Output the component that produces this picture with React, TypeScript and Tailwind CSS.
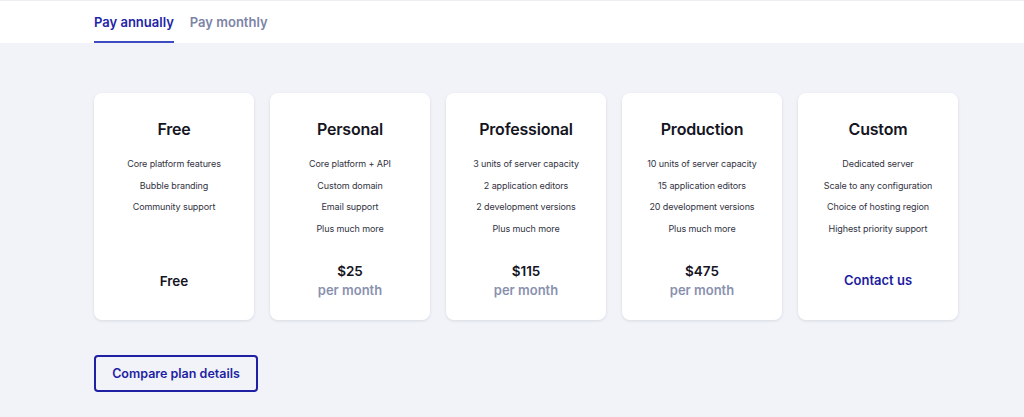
import React from "react";

interface Plan {
  name: string;
  features: string[];
  price?: string;
  label?: string;
  contact?: boolean;
}

const plans: Plan[] = [
  {
    name: "Free",
    features: ["Core platform features", "Bubble branding", "Community support"],
    label: "Free",
  },
  {
    name: "Personal",
    features: ["Core platform + API", "Custom domain", "Email support", "Plus much more"],
    price: "$25",
  },
  {
    name: "Professional",
    features: ["3 units of server capacity", "2 application editors", "2 development versions", "Plus much more"],
    price: "$115",
  },
  {
    name: "Production",
    features: ["10 units of server capacity", "15 application editors", "20 development versions", "Plus much more"],
    price: "$475",
  },
  {
    name: "Custom",
    features: ["Dedicated server", "Scale to any configuration", "Choice of hosting region", "Highest priority support"],
    contact: true,
  },
];

function PlanCard({ plan }: { plan: Plan }) {
  return (
    <div className="flex flex-col items-center w-[160px] h-[227px] rounded-lg bg-white shadow-[0_1px_3px_rgba(30,40,80,0.12)]">
      <h3 className="mt-6 text-[16px] leading-6 font-semibold tracking-[-0.2px] text-[#15151f]">{plan.name}</h3>
      <ul className="mt-[12px] flex flex-col items-center">
        {plan.features.map((f) => (
          <li key={f} className="text-[9px] leading-[21.5px] tracking-[-0.1px] text-[#33333f]">{f}</li>
        ))}
      </ul>
      <div className="mt-auto mb-[17px] h-[46px] flex flex-col items-center justify-center">
        {plan.price ? (
          <>
            <p className="mt-[2px] text-[13.5px] leading-[19px] font-semibold text-[#15151f]">{plan.price}</p>
            <p className="text-[13px] leading-[19px] font-semibold text-[#8a91b0]">per month</p>
          </>
        ) : plan.contact ? (
          <p className="text-[13px] leading-[19px] font-semibold text-[#1c1ca0]">Contact us</p>
        ) : (
          <p className="mt-[2px] text-[13.5px] leading-[19px] font-semibold text-[#15151f]">{plan.label}</p>
        )}
      </div>
    </div>
  );
}

export default function App() {
  return (
    <div className="min-h-[417px] bg-[#f1f3f8]" style={{ fontFamily: "Inter, 'Noto Sans', sans-serif" }}>
      <div className="h-[43px] bg-white border-t border-[#eceef2] flex items-end pl-[94px] gap-4">
        <button className="pt-[12px] pb-[9px] border-b-2 border-[#3e4cc4] text-[13px] leading-[19px] font-semibold text-[#2424a6]">
          Pay annually
        </button>
        <button className="pt-[12px] pb-[11px] text-[13px] leading-[19px] font-semibold text-[#7d84a6]">
          Pay monthly
        </button>
      </div>
      <div className="pl-[94px] pt-[50px] flex gap-4">
        {plans.map((p) => (
          <PlanCard key={p.name} plan={p} />
        ))}
      </div>
      <div className="pl-[94px] pt-[35px]">
        <button className="w-[164px] h-[37px] pt-[2px] rounded-[4px] border-2 border-[#1f1fa3] text-[12.5px] font-semibold text-[#1f1fa3]">
          Compare plan details
        </button>
      </div>
    </div>
  );
}
